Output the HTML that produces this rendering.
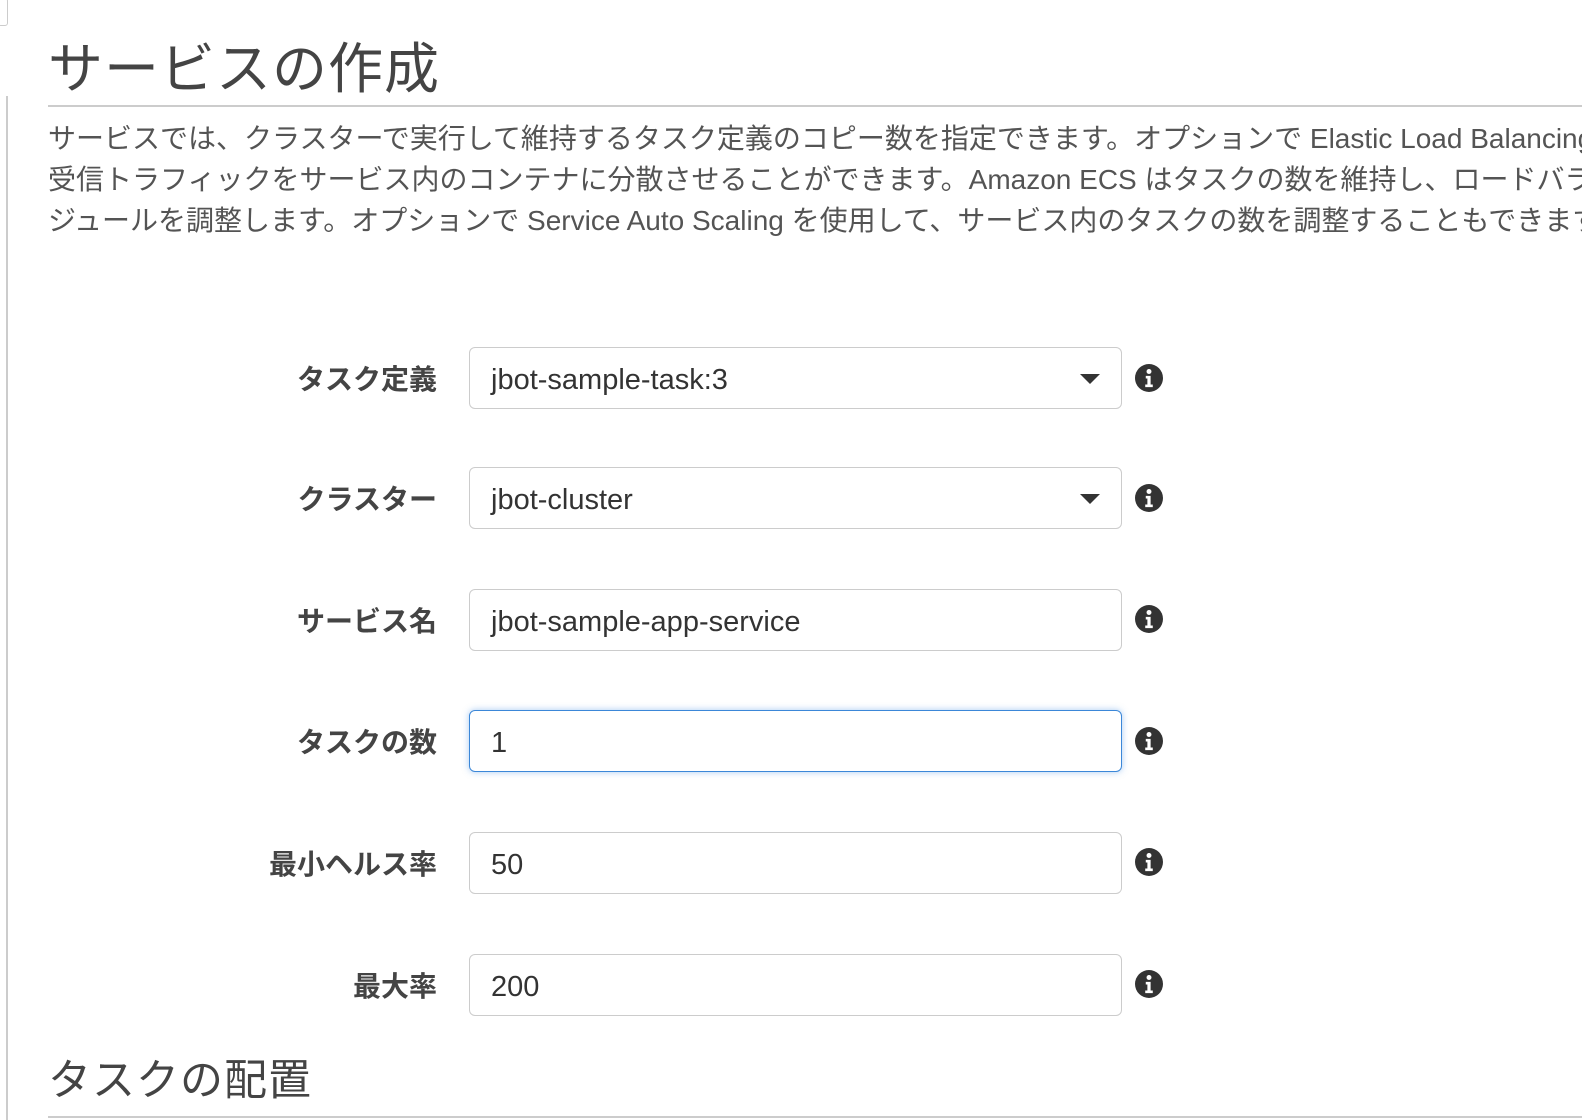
<!DOCTYPE html>
<html><head><meta charset="utf-8"><style>
html,body{margin:0;padding:0;background:#fff;width:1582px;height:1120px;overflow:hidden;position:relative;font-family:"Liberation Sans","Noto Sans CJK JP",sans-serif;color:#333}
.abs{position:absolute}
.p{left:48px;font-size:28px;color:#545454;white-space:nowrap;line-height:41.5px}
.lbl{right:1145px;width:300px;text-align:right;font-size:28px;font-weight:bold;color:#444;white-space:nowrap}
.in{left:469px;border:1.5px solid #ccc;border-radius:6px;box-sizing:border-box;width:653px;height:62px;font-size:29px;color:#333;line-height:64px;padding-left:21px}
.in.f{border:1.5px solid #3b87d8;box-shadow:0 0 7px rgba(80,150,230,.5)}
.arr{position:absolute;right:21px;top:26px;width:0;height:0;border-left:10px solid transparent;border-right:10px solid transparent;border-top:10px solid #333}
.i{left:1135px;width:28px;height:28px}
</style></head><body>
<div class="abs" style="left:-2px;top:-2px;width:8px;height:26px;border:1.5px solid #ccc;border-radius:3px"></div>
<div class="abs" style="left:6px;top:96px;width:2px;height:1030px;background:#ccc"></div>
<div class="abs" style="left:48px;top:24px;font-size:55px;color:#444;letter-spacing:1px">サービスの作成</div>
<div class="abs" style="left:48px;top:105px;width:1540px;height:2px;background:#ccc"></div>
<div class="abs p" style="top:118px">サービスでは、クラスターで実行して維持するタスク定義のコピー数を指定できます。オプションで Elastic Load Balancing</div>
<div class="abs p" style="top:159px">受信トラフィックをサービス内のコンテナに分散させることができます。Amazon ECS はタスクの数を維持し、ロードバランサ</div>
<div class="abs p" style="top:200px">ジュールを調整します。オプションで Service Auto Scaling を使用して、サービス内のタスクの数を調整することもできます</div>

<div class="abs lbl" style="top:358px">タスク定義</div>
<div class="abs in" style="top:347px">jbot-sample-task:3<div class="arr"></div></div>
<svg class="abs i" style="top:364px" viewBox="0 0 26 26"><circle cx="13" cy="13" r="13" fill="#333"/><circle cx="13" cy="7" r="2.3" fill="#fff"/><path d="M10 11h4.5v8h2v2.5h-7V19h2v-5.5h-1.5z" fill="#fff"/></svg>

<div class="abs lbl" style="top:478px">クラスター</div>
<div class="abs in" style="top:467px">jbot-cluster<div class="arr"></div></div>
<svg class="abs i" style="top:484px" viewBox="0 0 26 26"><circle cx="13" cy="13" r="13" fill="#333"/><circle cx="13" cy="7" r="2.3" fill="#fff"/><path d="M10 11h4.5v8h2v2.5h-7V19h2v-5.5h-1.5z" fill="#fff"/></svg>

<div class="abs lbl" style="top:600px">サービス名</div>
<div class="abs in" style="top:589px">jbot-sample-app-service</div>
<svg class="abs i" style="top:605px" viewBox="0 0 26 26"><circle cx="13" cy="13" r="13" fill="#333"/><circle cx="13" cy="7" r="2.3" fill="#fff"/><path d="M10 11h4.5v8h2v2.5h-7V19h2v-5.5h-1.5z" fill="#fff"/></svg>

<div class="abs lbl" style="top:721px">タスクの数</div>
<div class="abs in f" style="top:710px">1</div>
<svg class="abs i" style="top:727px" viewBox="0 0 26 26"><circle cx="13" cy="13" r="13" fill="#333"/><circle cx="13" cy="7" r="2.3" fill="#fff"/><path d="M10 11h4.5v8h2v2.5h-7V19h2v-5.5h-1.5z" fill="#fff"/></svg>

<div class="abs lbl" style="top:843px">最小ヘルス率</div>
<div class="abs in" style="top:832px">50</div>
<svg class="abs i" style="top:848px" viewBox="0 0 26 26"><circle cx="13" cy="13" r="13" fill="#333"/><circle cx="13" cy="7" r="2.3" fill="#fff"/><path d="M10 11h4.5v8h2v2.5h-7V19h2v-5.5h-1.5z" fill="#fff"/></svg>

<div class="abs lbl" style="top:965px">最大率</div>
<div class="abs in" style="top:954px">200</div>
<svg class="abs i" style="top:970px" viewBox="0 0 26 26"><circle cx="13" cy="13" r="13" fill="#333"/><circle cx="13" cy="7" r="2.3" fill="#fff"/><path d="M10 11h4.5v8h2v2.5h-7V19h2v-5.5h-1.5z" fill="#fff"/></svg>

<div class="abs" style="left:48px;top:1046px;font-size:43px;color:#444;letter-spacing:1px">タスクの配置</div>
<div class="abs" style="left:48px;top:1116px;width:1540px;height:2px;background:#ccc"></div>
</body></html>
